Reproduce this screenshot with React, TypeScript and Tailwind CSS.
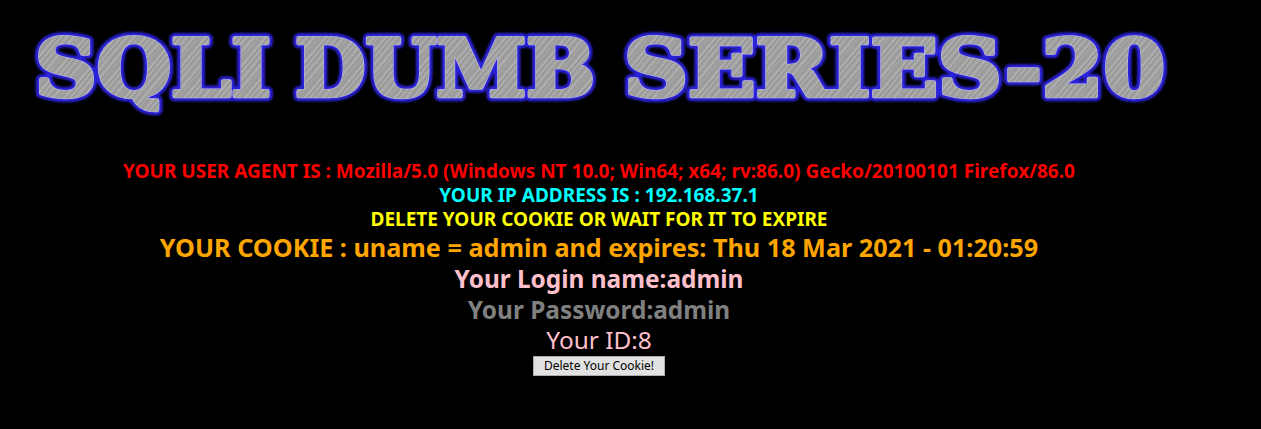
const words = [
  { label: 'SQLI', x: 35, len: 236 },
  { label: 'DUMB', x: 295, len: 300 },
  { label: 'SERIES-20', x: 624, len: 541 },
];

export default function App() {
  return (
    <div className="min-h-[429px] bg-black overflow-hidden font-['Noto_Sans','Open_Sans',sans-serif]">
      <div className="w-[1198px] flex flex-col items-center">
        {/* logo */}
        <svg width="1198" height="130" viewBox="0 0 1198 130" className="block self-start">
          <defs>
            <pattern id="metal" width="23" height="23" patternUnits="userSpaceOnUse" patternTransform="rotate(-50)">
              <rect width="23" height="23" fill="#a3a3a3" />
              <rect y="1" width="23" height="1" fill="#b0b0b0" />
              <rect y="3" width="23" height="1" fill="#949494" />
              <rect y="5" width="23" height="2" fill="#aaaaaa" />
              <rect y="8" width="23" height="1" fill="#909090" />
              <rect y="11" width="23" height="1" fill="#b4b4b4" />
              <rect y="13" width="23" height="1" fill="#989898" />
              <rect y="16" width="23" height="3" fill="#9c9c9c" />
              <rect y="20" width="23" height="1" fill="#b6b6b6" />
              <rect y="22" width="23" height="1" fill="#929292" />
            </pattern>
            <filter id="glow" x="-5%" y="-30%" width="110%" height="160%">
              <feGaussianBlur stdDeviation="1.1" />
            </filter>
          </defs>
          <g fontFamily="'DejaVu Serif', serif" fontWeight="700" fontSize="78" strokeLinejoin="round">
            {words.map((w) => (
              <text key={w.label} x={w.x} y="96" textLength={w.len} lengthAdjust="spacingAndGlyphs" fill="#2c24d8" stroke="#2c24d8" strokeWidth="10.5" filter="url(#glow)">
                {w.label}
              </text>
            ))}
            {words.map((w) => (
              <text key={w.label} x={w.x} y="96" textLength={w.len} lengthAdjust="spacingAndGlyphs" fill="#e8e8f4" stroke="#e8e8f4" strokeWidth="4.6" opacity="0.75">
                {w.label}
              </text>
            ))}
            {words.map((w) => (
              <text key={w.label} x={w.x} y="96" textLength={w.len} lengthAdjust="spacingAndGlyphs" fill="url(#metal)" stroke="url(#metal)" strokeWidth="3.6">
                {w.label}
              </text>
            ))}
          </g>
        </svg>
        <div className="mt-[29px] flex flex-col items-center font-bold whitespace-nowrap">
          <p className="text-[19px] leading-[24px] text-[#ff0000]">
            YOUR USER AGENT IS : Mozilla/5.0 (Windows NT 10.0; Win64; x64; rv:86.0) Gecko/20100101 Firefox/86.0
          </p>
          <p className="text-[19px] leading-[24px] text-[#00ffff]">YOUR IP ADDRESS IS : 192.168.37.1</p>
          <p className="text-[19px] leading-[24px] text-[#ffff00]">DELETE YOUR COOKIE OR WAIT FOR IT TO EXPIRE</p>
          <p className="mt-px text-[25.2px] leading-[30px] text-[#ffa500]">
            YOUR COOKIE : uname = admin and expires: Thu 18 Mar 2021 - 01:20:59
          </p>
          <p className="mt-px text-[24.4px] leading-[31px] text-[#ffc0cb]">Your Login name:admin</p>
          <p className="text-[24.4px] leading-[31px] text-[#808080]">Your Password:admin</p>
          <p className="text-[24.4px] leading-[30px] font-normal text-[#ffc0cb]">Your ID:8</p>
          <button className="mt-px w-[132px] h-[20px] bg-[#e1e1e1] border border-[#adadad] text-[12px] leading-none font-normal text-black">
            Delete Your Cookie!
          </button>
        </div>
      </div>
    </div>
  );
}
